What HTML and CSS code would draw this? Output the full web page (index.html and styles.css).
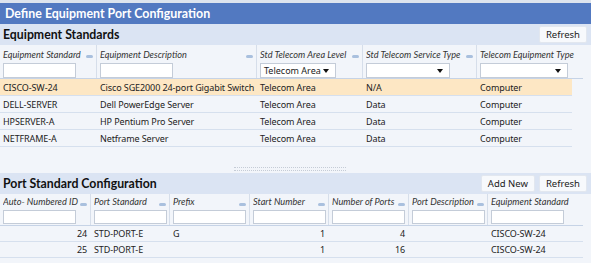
FILE: index.html
```html
<!DOCTYPE html>
<html>
<head>
<meta charset="utf-8">
<link rel="stylesheet" href="styles.css">
</head>
<body>
<div class="topband"></div>
<div class="titlebar">Define Equipment Port Configuration</div>

<div class="section-head">
  <h2>Equipment Standards</h2>
  <div class="btns"><button class="btn">Refresh</button></div>
</div>
<div class="grid grid1">
  <div class="hdr">
    <div class="hc c1"><div class="lbl"><span>Equipment Standard</span><i class="sort"></i></div><div class="fin"></div></div>
    <div class="hc c2"><div class="lbl"><span>Equipment Description</span><i class="sort"></i></div><div class="fin"></div></div>
    <div class="hc c3"><div class="lbl"><span>Std Telecom Area Level</span><i class="sort"></i></div><div class="fsel s1"><span>Telecom Area</span><b class="arr"></b></div></div>
    <div class="hc c4"><div class="lbl"><span>Std Telecom Service Type</span><i class="sort"></i></div><div class="fsel s2"><span></span><b class="arr"></b></div></div>
    <div class="hc c5 last"><div class="lbl"><span>Telecom Equipment Type</span></div><div class="fsel s3"><span></span><b class="arr"></b></div></div>
  </div>
  <div class="rows">
    <div class="row sel"><div class="c c1">CISCO-SW-24</div><div class="c c2">Cisco SGE2000 24-port Gigabit Switch</div><div class="c c3">Telecom Area</div><div class="c c4">N/A</div><div class="c c5">Computer</div></div>
    <div class="row"><div class="c c1">DELL-SERVER</div><div class="c c2">Dell PowerEdge Server</div><div class="c c3">Telecom Area</div><div class="c c4">Data</div><div class="c c5">Computer</div></div>
    <div class="row"><div class="c c1">HPSERVER-A</div><div class="c c2">HP Pentium Pro Server</div><div class="c c3">Telecom Area</div><div class="c c4">Data</div><div class="c c5">Computer</div></div>
    <div class="row"><div class="c c1">NETFRAME-A</div><div class="c c2">Netframe Server</div><div class="c c3">Telecom Area</div><div class="c c4">Data</div><div class="c c5">Computer</div></div>
  </div>
</div>

<div class="splitter"><div class="dots"></div></div>

<div class="section-head s2head">
  <h2>Port Standard Configuration</h2>
  <div class="btns"><button class="btn">Add New</button><button class="btn">Refresh</button></div>
</div>
<div class="grid grid2">
  <div class="hdr">
    <div class="hc d1"><div class="lbl"><span>Auto- Numbered ID</span><i class="sort"></i></div><div class="fin"></div></div>
    <div class="hc d2"><div class="lbl"><span>Port Standard</span><i class="sort"></i></div><div class="fin"></div></div>
    <div class="hc d3"><div class="lbl"><span>Prefix</span><i class="sort"></i></div><div class="fin"></div></div>
    <div class="hc d4"><div class="lbl"><span>Start Number</span><i class="sort"></i></div><div class="fin"></div></div>
    <div class="hc d5"><div class="lbl"><span>Number of Ports</span><i class="sort"></i></div><div class="fin"></div></div>
    <div class="hc d6"><div class="lbl"><span>Port Description</span><i class="sort"></i></div><div class="fin"></div></div>
    <div class="hc d7 last"><div class="lbl"><span>Equipment Standard</span></div><div class="fin"></div></div>
  </div>
  <div class="rows">
    <div class="row"><div class="c d1 num">24</div><div class="c d2">STD-PORT-E</div><div class="c d3">G</div><div class="c d4 num">1</div><div class="c d5 num">4</div><div class="c d6"></div><div class="c d7">CISCO-SW-24</div></div>
    <div class="row"><div class="c d1 num">25</div><div class="c d2">STD-PORT-E</div><div class="c d3"></div><div class="c d4 num">1</div><div class="c d5 num">16</div><div class="c d6"></div><div class="c d7">CISCO-SW-24</div></div>
  </div>
</div>
</body>
</html>
```

FILE: styles.css
```css
* { box-sizing: border-box; }
html, body { margin: 0; padding: 0; }
body {
  width: 591px;
  height: 263px;
  overflow: hidden;
  background: #f2f5fa;
  font-family: "Noto Sans", "Open Sans", sans-serif;
  font-size: 9px;
  color: #222;
}
.topband { height: 3px; background: #dde4ee; }
.titlebar {
  height: 21px;
  background: #5279c1;
  color: #fff;
  font-family: Lato, "Noto Sans", sans-serif;
  font-weight: bold;
  font-size: 12.4px;
  line-height: 21px;
  padding-left: 5px;
}
.section-head {
  height: 21px;
  background: #dbe4f3;
  display: flex;
  align-items: center;
  justify-content: space-between;
  padding: 0 4px 0 3px;
}
.section-head h2 {
  margin: 0;
  font-family: Lato, "Noto Sans", sans-serif;
  font-size: 12.3px;
  font-weight: bold;
  color: #111;
}
.btns { display: flex; gap: 4px; }
.btn {
  font-family: "Noto Sans", "Open Sans", sans-serif;
  font-size: 9.5px;
  color: #222;
  background: #f7f9fc;
  border: 1px solid #e2e7ef;
  border-radius: 2px;
  height: 17px;
  padding: 0 6px;
  line-height: 15px;
}
.grid { width: 583px; }
.hdr {
  display: flex;
  border-bottom: 1px solid #c6d3e6;
}
.grid1 .hdr { height: 34px; }
.grid2 .hdr { height: 32px; }
.hc {
  border-right: 1px solid #d6deea;
  padding: 0 3px;
  display: flex;
  flex-direction: column;
}
.hc.last { border-right: none; flex: 1; }
.lbl {
  display: flex;
  align-items: center;
  justify-content: space-between;
  font-family: Lato, "Noto Sans", sans-serif;
  font-style: italic;
  font-size: 9.2px;
  color: #333;
  height: 15px;
  margin-top: 2px;
  white-space: nowrap;
  overflow: hidden;
}
.grid2 .lbl { margin-top: 0; }
.sort {
  display: block;
  width: 7px;
  height: 3px;
  border-radius: 2px;
  background: #a9c0de;
  margin-top: 5px;
  flex: none;
}
.fin, .fsel {
  width: 73px;
  height: 15px;
  background: #fff;
  border: 1px solid #c4ccd8;
  margin-top: 2px;
}
.grid2 .fin { margin-top: 1px; height: 14px; }
.fsel {
  display: flex;
  align-items: center;
  justify-content: space-between;
  padding: 0 6px 0 3px;
  font-size: 9px;
  white-space: nowrap;
}
.s1 { width: 76px; }
.s2 { width: 84px; }
.s3 { width: 88px; }
.arr {
  width: 0; height: 0;
  border-left: 3px solid transparent;
  border-right: 3px solid transparent;
  border-top: 4px solid #111;
  flex: none;
}
.c1 { width: 97px; }
.c2 { width: 160px; }
.c3 { width: 106px; }
.c4 { width: 114px; }
.c5 { width: 95px; }
.hc.c5 { width: auto; }
.d1 { width: 91px; }
.d2 { width: 79px; }
.d3 { width: 80px; }
.d4 { width: 79px; }
.d5 { width: 80px; }
.d6 { width: 79px; }
.d7 { width: 95px; }
.rows .row {
  display: flex;
  height: 17px;
  border-bottom: 1px solid #d6e0ee;
  align-items: center;
}
.grid1 .rows .row { width: 572px; }
.grid2 .rows .row { height: 16px; }
.row.sel { background: #fde7c4; }
.c {
  padding: 0 3px;
  white-space: nowrap;
  overflow: hidden;
  font-size: 9px;
  letter-spacing: -0.1px;
}
.c.num { text-align: right; padding-right: 4px; }
.splitter {
  height: 26px;
  position: relative;
}
.dots {
  position: absolute;
  left: 234px;
  top: 20px;
  width: 112px;
  height: 4px;
  border-top: 1px dotted #c5ccd6;
  border-bottom: 1px dotted #c5ccd6;
}
```
